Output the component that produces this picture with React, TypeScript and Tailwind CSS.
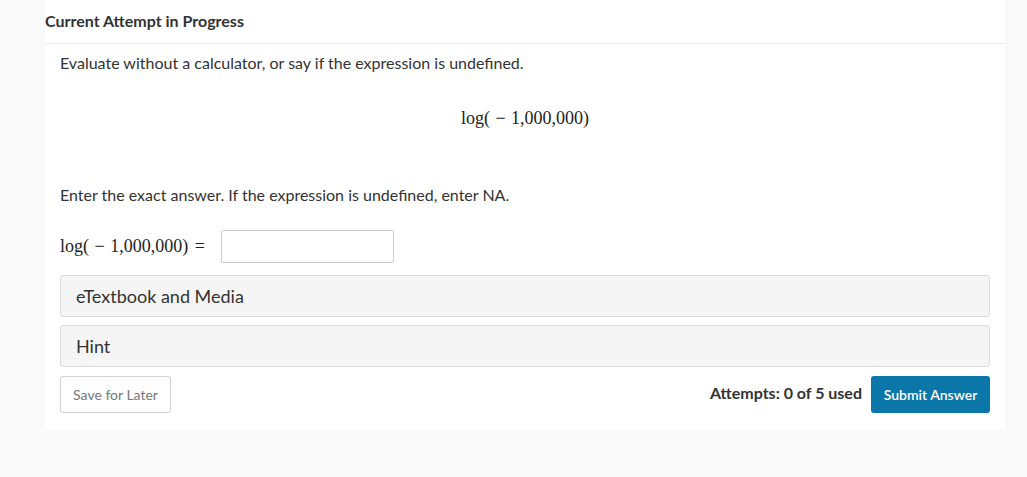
export default function App() {
  const serif = { fontFamily: '"Liberation Serif", "Times New Roman", serif' };
  return (
    <div className="min-h-[477px] bg-[#f9f9f9] font-['Lato',sans-serif] text-[#333]">
      <div className="ml-[45px] w-[960px] bg-white pb-[17px]">
        <div className="border-b border-[#eaeaea] h-[44px] flex items-center">
          <h2 className="text-[16px] font-bold text-[#333] -mt-[2px]">Current Attempt in Progress</h2>
        </div>
        <div className="px-[15px]">
          <p className="text-[16px] mt-[9px] leading-[20px]">Evaluate without a calculator, or say if the expression is undefined.</p>
          <div className="text-center mt-[35px] text-[18px] leading-[20px] text-[#222]" style={serif}>
            log( <span className="mx-[1px]">−</span> 1,000,000)
          </div>
          <p className="text-[16px] mt-[57px] leading-[20px]">Enter the exact answer. If the expression is undefined, enter NA.</p>
          <div className="flex items-center mt-[25px] mb-[1px]">
            <span className="text-[18px] text-[#222]" style={serif}>
              log( <span className="mx-[1px]">−</span> 1,000,000) <span className="ml-[2px]">=</span>
            </span>
            <input
              type="text"
              className="ml-[16px] w-[173px] h-[33px] border border-[#ccc] rounded-[2px] bg-white outline-none"
            />
          </div>
          <div className="mt-[12px] h-[42px] bg-[#f5f5f5] border border-[#dcdcdc] rounded-[3px] flex items-center px-[15px] text-[18px] text-[#333]">
            eTextbook and Media
          </div>
          <div className="mt-[8px] h-[42px] bg-[#f5f5f5] border border-[#dcdcdc] rounded-[3px] flex items-center px-[15px] text-[18px] text-[#333]">
            Hint
          </div>
          <div className="mt-[9px] flex items-center justify-between">
            <button className="h-[37px] w-[111px] border border-[#d0d0d0] rounded-[3px] bg-white text-[14px] text-[#777]">
              Save for Later
            </button>
            <div className="flex items-center">
              <span className="text-[16px] font-bold text-[#333] mr-[9px] -mt-[3px]">Attempts: 0 of 5 used</span>
              <button className="h-[37px] w-[119px] rounded-[3px] bg-[#0b77a8] text-white text-[14px] font-semibold">
                Submit Answer
              </button>
            </div>
          </div>
        </div>
      </div>
    </div>
  );
}
